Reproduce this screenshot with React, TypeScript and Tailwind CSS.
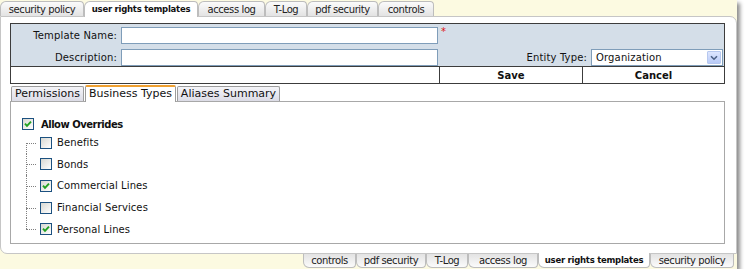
const topTabs = [
  { label: 'security policy', w: 'w-[84px]' },
  { label: 'user rights templates', w: 'w-[114px]', active: true },
  { label: 'access log', w: 'w-[67px]' },
  { label: 'T-Log', w: 'w-[42px]' },
  { label: 'pdf security', w: 'w-[71px]' },
  { label: 'controls', w: 'w-[56px]' },
];

const bottomTabs = [
  { label: 'controls', w: 'w-[53px]' },
  { label: 'pdf security', w: 'w-[70px]' },
  { label: 'T-Log', w: 'w-[42px]' },
  { label: 'access log', w: 'w-[70px]' },
  { label: 'user rights templates', w: 'w-[112px]', active: true },
  { label: 'security policy', w: 'w-[84px]' },
];

const businessTypes = [
  { name: 'Benefits', checked: false },
  { name: 'Bonds', checked: false },
  { name: 'Commercial Lines', checked: true },
  { name: 'Financial Services', checked: false },
  { name: 'Personal Lines', checked: true },
];

function CheckBox({ checked }: { checked?: boolean }) {
  return (
    <span className="flex h-[12px] w-[12px] shrink-0 items-center justify-center border border-[#1c5180] bg-linear-to-br from-[#d8d8d2] to-white">
      {checked && (
        <svg width="8" height="8" viewBox="0 0 8 8">
          <path d="M1 3.6 L3 5.8 L7 1.6" fill="none" stroke="#21a121" strokeWidth="1.9" />
        </svg>
      )}
    </span>
  );
}

export default function App() {
  return (
    <div className="flex h-[269px] w-[737px] flex-col bg-[#fcfae1] font-['DejaVu_Sans',sans-serif] text-[#111] shadow-[3px_3px_4px_rgba(0,0,0,0.45)]">
      {/* top tabs */}
      <div className="flex h-[16px] items-start">
        {topTabs.map((t) =>
          t.active ? (
            <div
              key={t.label}
              className={`${t.w} relative z-10 mt-[1px] flex h-[16px] items-center justify-center rounded-tl-[6px] rounded-tr-[4px] border-x border-t border-[#bdbdbd] bg-white text-[8.5px] font-bold tracking-[-0.25px]`}
            >
              {t.label}
            </div>
          ) : (
            <div
              key={t.label}
              className={`${t.w} mt-[1px] flex h-[15px] items-center justify-center rounded-tl-[6px] rounded-tr-[4px] border-x border-t border-[#bdbdbd] bg-linear-to-b from-[#fbfbfb] to-[#e3e3e3] text-[10px] tracking-[-0.4px] text-[#222]`}
            >
              {t.label}
            </div>
          )
        )}
      </div>

      {/* main panel */}
      <div className="relative flex flex-1 flex-col rounded-tr-[7px] rounded-bl-[7px] border border-[#c6c6c6] bg-white pt-[6px] pl-[9px] text-[10px]">
        {/* form */}
        <div className="w-[715px] border border-[#3c3c3c]">
          <div className="flex h-[42px] flex-col gap-[5px] bg-[#d4dee8] pt-[3px]">
            <div className="flex h-[17px] items-center">
              <span className="w-[106px] text-right tracking-[0.15px]">Template Name:</span>
              <input className="ml-[4px] h-[17px] w-[317px] border border-[#7f9db9] bg-white outline-none" />
              <span className="ml-[3px] self-start text-[10px] leading-[10px] text-[#e01010]">*</span>
            </div>
            <div className="flex h-[17px] items-center">
              <span className="w-[106px] text-right tracking-[0.15px]">Description:</span>
              <input className="ml-[4px] h-[17px] w-[317px] border border-[#7f9db9] bg-white outline-none" />
              <span className="ml-auto tracking-[0.15px]">Entity Type:</span>
              <div className="mr-[1px] ml-[4px] flex h-[17px] w-[132px] items-center border border-[#7f9db9] bg-white">
                <span className="flex-1 pl-[4px] tracking-[0.15px]">Organization</span>
                <span className="mr-[1px] flex h-[13px] w-[14px] items-center justify-center rounded-[1px] border border-[#b7c8ef] bg-linear-to-b from-[#dde6fe] to-[#b9cbf8]">
                  <svg width="8" height="6" viewBox="0 0 8 6">
                    <path d="M1 1.2 L4 4.2 L7 1.2" fill="none" stroke="#4d6185" strokeWidth="1.6" />
                  </svg>
                </span>
              </div>
            </div>
          </div>
          <div className="grid h-[17px] grid-cols-[428px_143px_1fr] border-t border-[#3c3c3c] font-bold">
            <div />
            <div className="flex items-center justify-center border-l border-[#3c3c3c]">Save</div>
            <div className="flex items-center justify-center border-l border-[#3c3c3c]">Cancel</div>
          </div>
        </div>

        {/* inner tabs */}
        <div className="mt-[1px] flex h-[16px] items-end gap-[1px] pl-[1px] text-[11px]">
          <div className="flex h-[15px] w-[73px] items-center justify-center rounded-t-[2px] border-x border-t border-[#9c9c9c] bg-linear-to-b from-[#f5f5f9] to-[#dcdce6]">
            Permissions
          </div>
          <div className="relative z-10 -mb-px flex h-[17px] w-[91px] items-center justify-center rounded-t-[2px] border-x border-t-2 border-x-[#9c9c9c] border-t-[#f0a030] bg-white">
            Business Types
          </div>
          <div className="flex h-[15px] w-[103px] items-center justify-center rounded-t-[2px] border-x border-t border-[#9c9c9c] bg-linear-to-b from-[#f5f5f9] to-[#dcdce6]">
            Aliases Summary
          </div>
        </div>

        {/* tab content */}
        <div className="h-[143px] w-[715px] border border-[#a8a8a8] pt-[16px] pl-[11px]">
          <div className="flex h-[12px] items-center">
            <CheckBox checked />
            <span className="ml-[7px] font-bold tracking-[-0.5px]">Allow Overrides</span>
          </div>
          <div className="mt-[2px] pl-[4px]">
            {businessTypes.map((b, i) => {
              const first = i === 0;
              const last = i === businessTypes.length - 1;
              return (
                <div key={b.name} className="flex h-[21.6px] items-center">
                  <div className="relative h-full w-[14px] shrink-0">
                    <div
                      className={`absolute left-0 border-l border-dotted border-[#808080] ${
                        first ? 'top-1/2 bottom-0' : last ? 'top-0 bottom-1/2' : 'top-0 bottom-0'
                      }`}
                    />
                    <div className="absolute top-1/2 left-0 w-[10px] border-t border-dotted border-[#808080]" />
                  </div>
                  <CheckBox checked={b.checked} />
                  <span className="ml-[5px] tracking-[0.1px]">{b.name}</span>
                </div>
              );
            })}
          </div>
        </div>
      </div>

      {/* bottom tabs */}
      <div className="flex h-[15px] items-start justify-end pr-[3px]">
        {bottomTabs.map((t) =>
          t.active ? (
            <div
              key={t.label}
              className={`${t.w} relative z-10 -mt-px flex h-[15px] items-center justify-center rounded-br-[4px] rounded-bl-[6px] border-x border-b border-[#bdbdbd] bg-white text-[8.5px] font-bold tracking-[-0.25px]`}
            >
              {t.label}
            </div>
          ) : (
            <div
              key={t.label}
              className={`${t.w} flex h-[14px] items-center justify-center rounded-br-[4px] rounded-bl-[6px] border-x border-b border-[#bdbdbd] bg-linear-to-t from-[#fbfbfb] to-[#e3e3e3] text-[10px] tracking-[-0.4px] text-[#222]`}
            >
              {t.label}
            </div>
          )
        )}
      </div>
    </div>
  );
}
